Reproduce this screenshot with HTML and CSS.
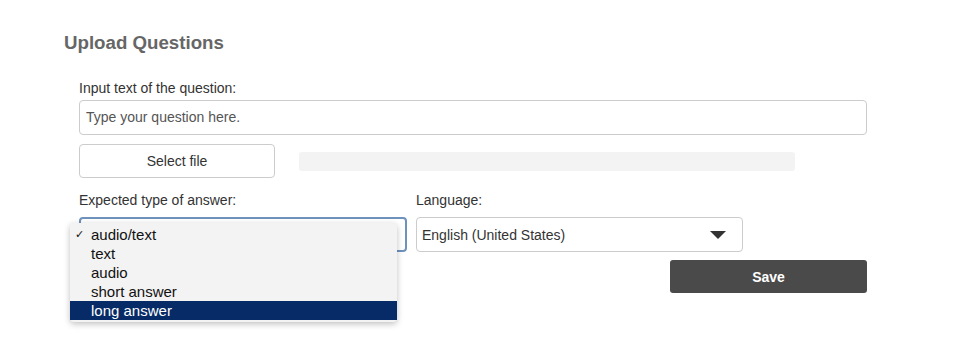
FILE: index.html
```html
<!DOCTYPE html>
<html lang="en">

<head>
    <meta charset="UTF-8">
    <meta name="viewport" content="width=device-width, initial-scale=1.0">
    <title>Upload Questions</title>
    <link rel="stylesheet" href="styles.css">
</head>

<body>

    <div class="page">
        <h2 class="title">Upload Questions</h2>

        <div class="form">
            <div class="field">
                <label for="question">Input text of the question:</label>
                <div id="question" class="text-input">Type your question here.</div>
            </div>

            <div class="file-row">
                <button class="file-btn">Select file</button>
                <div class="progress"></div>
            </div>

            <div class="select-row">
                <div class="select-col answer-col">
                    <label>Expected type of answer:</label>
                    <div class="select focused">
                        <ul class="dropdown">
                            <li class="checked">audio/text</li>
                            <li>text</li>
                            <li>audio</li>
                            <li>short answer</li>
                            <li class="active">long answer</li>
                        </ul>
                    </div>
                </div>
                <div class="select-col lang-col">
                    <label>Language:</label>
                    <div class="select">
                        <span>English (United States)</span>
                        <span class="caret"></span>
                    </div>
                </div>
            </div>

            <div class="actions">
                <button class="save-btn">Save</button>
            </div>
        </div>
    </div>

</body>

</html>
```

FILE: styles.css
```css
html,
body {
    min-height: 100%;
}

body {
    font-family: "Liberation Sans", Arial, sans-serif;
    background-color: #fff;
    color: #333;
    margin: 0;
    padding: 0;
    min-height: 348px;
}

.page {
    padding: 32px 0 40px 64px;
}

.title {
    margin: 0;
    font-size: 18.7px;
    line-height: 22px;
    font-weight: bold;
    color: #666;
}

.form {
    width: 788px;
    margin: 26px 0 0 15px;
}

label {
    display: block;
    font-size: 14px;
    line-height: 16px;
    color: #333;
    margin-bottom: 4px;
}

.text-input {
    box-sizing: border-box;
    height: 35px;
    border: 1px solid #ccc;
    border-radius: 4px;
    padding: 0 6px;
    font-size: 14px;
    line-height: 33px;
    color: #555;
}

.file-row {
    display: flex;
    align-items: center;
    margin-top: 9px;
}

.file-btn {
    box-sizing: border-box;
    width: 196px;
    height: 34px;
    background-color: #fff;
    border: 1px solid #ccc;
    border-radius: 4px;
    font-family: inherit;
    font-size: 14px;
    color: #333;
}

.progress {
    width: 496px;
    height: 19px;
    margin-left: 24px;
    background-color: #f3f3f3;
    border-radius: 3px;
}

.select-row {
    display: flex;
    gap: 9px;
    margin-top: 14px;
}

.answer-col {
    width: 328px;
}

.lang-col {
    width: 327px;
}

.select-col label {
    margin-bottom: 9px;
}

.select {
    position: relative;
    box-sizing: border-box;
    height: 35px;
    border: 1px solid #ccc;
    border-radius: 4px;
    display: flex;
    align-items: center;
    justify-content: space-between;
    padding: 0 16px 0 5px;
    font-size: 14px;
    color: #333;
}

.select.focused {
    border: 2px solid #6f92bd;
}

.caret {
    width: 0;
    height: 0;
    border-left: 8px solid transparent;
    border-right: 8px solid transparent;
    border-top: 8px solid #333;
}

.dropdown {
    position: absolute;
    left: -11px;
    top: 4px;
    width: 327px;
    margin: 0;
    padding: 2px 0;
    list-style: none;
    background-color: #f3f3f3;
    border-radius: 4px;
    box-shadow: 0 2px 6px rgba(0, 0, 0, 0.25);
    font-size: 15px;
    color: #111;
}

.dropdown li {
    position: relative;
    height: 19px;
    line-height: 19px;
    padding-left: 21px;
}

.dropdown li.checked::before {
    content: "\2713";
    position: absolute;
    left: 5px;
    font-size: 11px;
}

.dropdown li.active {
    background-color: #062b66;
    color: #fff;
}

.actions {
    display: flex;
    justify-content: flex-end;
    margin-top: 8px;
}

.save-btn {
    width: 197px;
    height: 33px;
    background-color: #4a4a4a;
    color: white;
    border: none;
    border-radius: 3px;
    font-family: inherit;
    font-size: 14px;
    font-weight: bold;
}
```
